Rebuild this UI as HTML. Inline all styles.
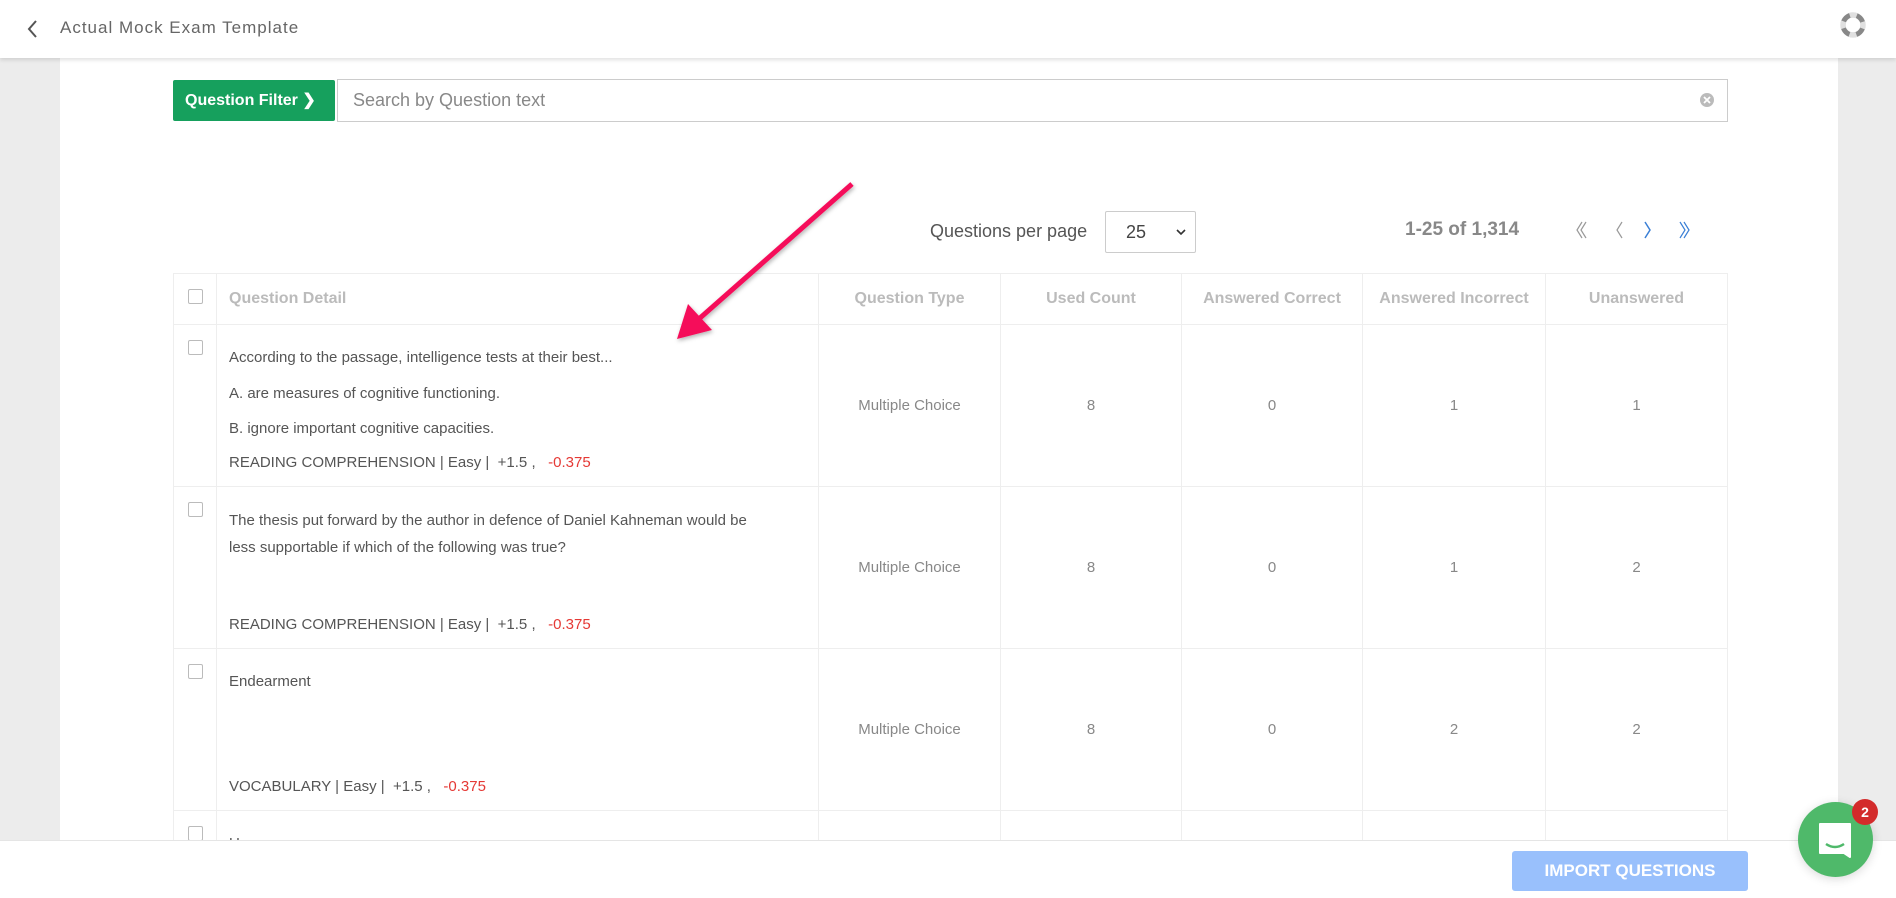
<!DOCTYPE html>
<html style="height:898px;overflow:hidden"><head><style>
body{margin:0;width:1896px;height:898px;overflow:hidden;background:#ececec;font-family:"Liberation Sans",sans-serif;position:relative}
.hdr{position:absolute;left:0;top:0;width:1896px;height:58px;background:#fff;box-shadow:0 2px 4px rgba(0,0,0,.12);z-index:3}
.panel{position:absolute;left:60px;top:58px;width:1778px;height:840px;background:#fff}
.abs{position:absolute}
.wrap{position:absolute;left:0;top:0;width:1896px;height:898px;overflow:hidden}
table{position:absolute;left:173px;top:273px;border-collapse:collapse;table-layout:fixed}
td,th{border:1px solid #eee;padding:0;font-size:15px;color:#888;text-align:center;font-weight:normal;box-sizing:border-box}
th{height:51px;color:#bbb;font-weight:bold;font-size:16px}
td{height:162px;position:relative}
.cb{display:inline-block;width:13px;height:13px;border:1px solid #bbb;border-radius:2px;background:#fff}
td .cb{position:absolute;left:14px;top:15px}
.det{text-align:left;color:#555}
.det div{position:absolute;left:12px}
.red{color:#e53935}
</style></head><body><div class="wrap">
<div class="hdr">
<svg class="abs" style="left:27px;top:19px" width="12" height="20"><path d="M9 2 L2 10 L9 18" stroke="#555" stroke-width="2" fill="none"/></svg>
<div class="abs" style="left:60px;top:18px;font-size:17px;color:#666;letter-spacing:1px">Actual Mock Exam Template</div>
<svg class="abs" style="left:1840px;top:12px" width="26" height="26" viewBox="0 0 26 26"><circle cx="13" cy="13" r="10" fill="none" stroke="#888" stroke-width="5"/><circle cx="13" cy="13" r="10" fill="none" stroke="#e0e0e0" stroke-width="5.5" stroke-dasharray="7 8.7" stroke-dashoffset="3.5"/></svg>
</div>
<div class="panel"></div>
<div class="abs" style="left:173px;top:80px;width:162px;height:41px;background:#16a05d;border-radius:2px;color:#fff;font-weight:bold;font-size:16px;line-height:41px;text-indent:12px">Question Filter &#10095;</div>
<div class="abs" style="left:337px;top:79px;width:1389px;height:41px;border:1px solid #ccc;font-size:18px;color:#888;line-height:41px;text-indent:15px">Search by Question text</div>
<svg class="abs" style="left:1699px;top:92px" width="16" height="16"><circle cx="8" cy="8" r="7" fill="#bbb"/><path d="M5 5L11 11M11 5L5 11" stroke="#fff" stroke-width="1.8"/></svg>
<div class="abs" style="left:930px;top:221px;font-size:18px;color:#555">Questions per page</div>
<div class="abs" style="left:1105px;top:211px;width:89px;height:40px;border:1px solid #ccc;border-radius:2px;font-size:18px;color:#444;line-height:40px;text-indent:20px">25
<svg style="position:absolute;left:70px;top:16px" width="10" height="8"><path d="M1 2L5 6L9 2" stroke="#333" stroke-width="1.6" fill="none"/></svg></div>
<div class="abs" style="left:1405px;top:219px;font-size:19px;color:#888;font-weight:bold">1-25 of 1,314</div>
<svg class="abs" style="left:1570px;top:218px" width="130" height="24">
<path d="M12 4L7 12L12 20M16 4L11 12L16 20" stroke="#999" stroke-width="1.2" fill="none"/>
<path d="M52 4L47 12L52 20" stroke="#999" stroke-width="1.2" fill="none"/>
<path d="M75 4L80 12L75 20" stroke="#3a7fd5" stroke-width="1.5" fill="none"/>
<path d="M110 4L115 12L110 20M114 4L119 12L114 20" stroke="#3a7fd5" stroke-width="1.2" fill="none"/>
</svg>
<table>
<colgroup><col style="width:43px"><col style="width:602px"><col style="width:182px"><col style="width:181px"><col style="width:181px"><col style="width:183px"><col style="width:182px"></colgroup>
<tr><th><span class="cb"></span></th><th style="text-align:left;padding-left:12px">Question Detail</th><th>Question Type</th><th>Used Count</th><th>Answered Correct</th><th>Answered Incorrect</th><th>Unanswered</th></tr>
<tr><td><span class="cb"></span></td><td class="det"><div style="top:24px">According to the passage, intelligence tests at their best...</div><div style="top:60px">A. are measures of cognitive functioning.</div><div style="top:95px">B. ignore important cognitive capacities.</div><div style="top:129px">READING COMPREHENSION | Easy | &nbsp;+1.5 , &nbsp;&nbsp;<span class="red">-0.375</span></div></td><td>Multiple Choice</td><td>8</td><td>0</td><td>1</td><td>1</td></tr>
<tr><td><span class="cb"></span></td><td class="det"><div style="top:20px;line-height:27px">The thesis put forward by the author in defence of Daniel Kahneman would be<br>less supportable if which of the following was true?</div><div style="top:129px">READING COMPREHENSION | Easy | &nbsp;+1.5 , &nbsp;&nbsp;<span class="red">-0.375</span></div></td><td>Multiple Choice</td><td>8</td><td>0</td><td>1</td><td>2</td></tr>
<tr><td><span class="cb"></span></td><td class="det"><div style="top:24px">Endearment</div><div style="top:129px">VOCABULARY | Easy | &nbsp;+1.5 , &nbsp;&nbsp;<span class="red">-0.375</span></div></td><td>Multiple Choice</td><td>8</td><td>0</td><td>2</td><td>2</td></tr>
<tr><td style="height:40px"><span class="cb"></span></td><td class="det"><div style="top:24px">U</div></td><td></td><td></td><td></td><td></td><td></td></tr>
</table>
<svg class="abs" style="left:0;top:0;z-index:2" width="1896" height="898"><defs><filter id="s"><feDropShadow dx="1" dy="2" stdDeviation="2" flood-opacity=".3"/></filter></defs><g filter="url(#s)"><line x1="852" y1="184" x2="700" y2="318" stroke="#f5115a" stroke-width="5"/><polygon points="677,339 688,304 712,330" fill="#f5115a"/></g></svg>
<div class="abs" style="left:0;top:840px;width:1896px;height:58px;background:#fff;border-top:1px solid #e5e5e5;z-index:4"></div>
<div class="abs" style="left:1512px;top:851px;width:236px;height:40px;background:#99c0fc;border-radius:3px;color:#fff;font-weight:bold;font-size:17px;text-align:center;line-height:40px;z-index:5">IMPORT QUESTIONS</div>
<div class="abs" style="left:1798px;top:802px;width:75px;height:75px;border-radius:50%;background:#4fb96a;z-index:5;box-shadow:0 2px 10px rgba(0,0,0,.15)">
<svg width="75" height="75" style="position:absolute;left:0;top:0"><path d="M22 22 H52 V55 L46 51 H22 Z" fill="#fff" stroke="#fff" stroke-width="2" stroke-linejoin="round"/><path d="M28 42 Q37 48 46 42" stroke="#4fb96a" stroke-width="2.5" fill="none"/></svg>
<div style="position:absolute;left:54px;top:-3px;width:26px;height:26px;border-radius:50%;background:#d32b2b;color:#fff;font-size:14px;font-weight:bold;text-align:center;line-height:26px">2</div></div>
</div></body></html>
